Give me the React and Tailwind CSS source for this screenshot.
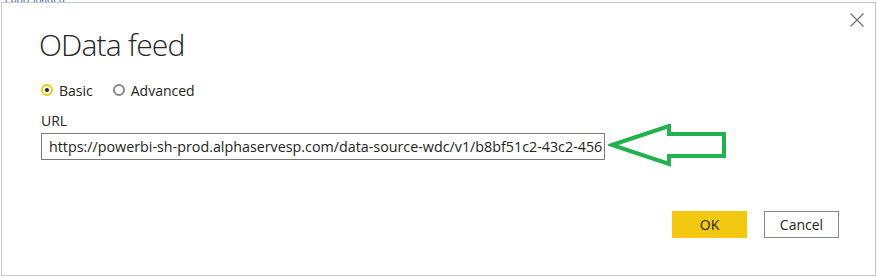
export default function App() {
  const font = { fontFamily: '"Open Sans", "Noto Sans", sans-serif' };
  return (
    <div className="w-[877px] h-[277px] bg-white overflow-hidden" style={font}>
      <div className="h-[2px] overflow-hidden pl-[5px] text-[10px] leading-[6px] text-[#2a5db0]">
        <span className="relative -top-[4px]">eport loaded</span>
      </div>
      <div className="ml-[1px] w-[875px] h-[274px] border border-[#c8c8c8] bg-white flex flex-col">
        <div className="flex justify-between items-start">
          <h1 className="pl-[37px] pt-[20px] text-[30px] leading-[44px] tracking-[-0.8px] font-light text-[#252423]">OData feed</h1>
          <button className="mt-[9px] mr-[10px] w-[16px] h-[16px] flex items-center justify-center">
            <svg width="16" height="16" viewBox="0 0 16 16">
              <path d="M1.5 1.5 L14.5 14.5 M14.5 1.5 L1.5 14.5" stroke="#6b6b6b" strokeWidth="1.1" fill="none" />
            </svg>
          </button>
        </div>
        <div className="pl-[39px] mt-[13px] flex items-center h-[20px] text-[14px] text-[#252423]">
          <span className="w-[12px] h-[12px] rounded-full border-[2px] border-[#f2c811] flex items-center justify-center">
            <span className="w-[4px] h-[4px] rounded-full bg-[#252423]" />
          </span>
          <span className="ml-[6px]">Basic</span>
          <span className="ml-[20px] w-[12px] h-[12px] rounded-full border-[2px] border-[#8a8886]" />
          <span className="ml-[6px]">Advanced</span>
        </div>
        <div className="pl-[39px] mt-[12px] text-[14px] leading-[18px] text-[#252423]">URL</div>
        <div className="flex items-center mt-[3px] pl-[39px]">
          <div className="w-[564px] h-[27px] border border-[#7a7a7a] pl-[7px] flex items-center overflow-hidden whitespace-nowrap text-[14.3px] text-[#252423]">
            https://powerbi-sh-prod.alphaservesp.com/data-source-wdc/v1/b8bf51c2-43c2-456
          </div>
          <svg width="124" height="46" viewBox="0 0 124 46" className="ml-[3px] -my-[10px]">
            <polygon
              points="4,21 61,2 61,10 116,10 116,32 61,32 61,40"
              fill="none"
              stroke="#22b14c"
              strokeWidth="4"
              strokeLinejoin="miter"
            />
          </svg>
        </div>
        <div className="flex justify-end gap-[17px] mt-[51px] pr-[36px]">
          <button className="w-[75px] h-[27px] bg-[#f2c811] text-[14px] text-[#252423]">OK</button>
          <button className="w-[75px] h-[27px] border border-[#8a8886] bg-white text-[14px] text-[#252423]">Cancel</button>
        </div>
      </div>
    </div>
  );
}
